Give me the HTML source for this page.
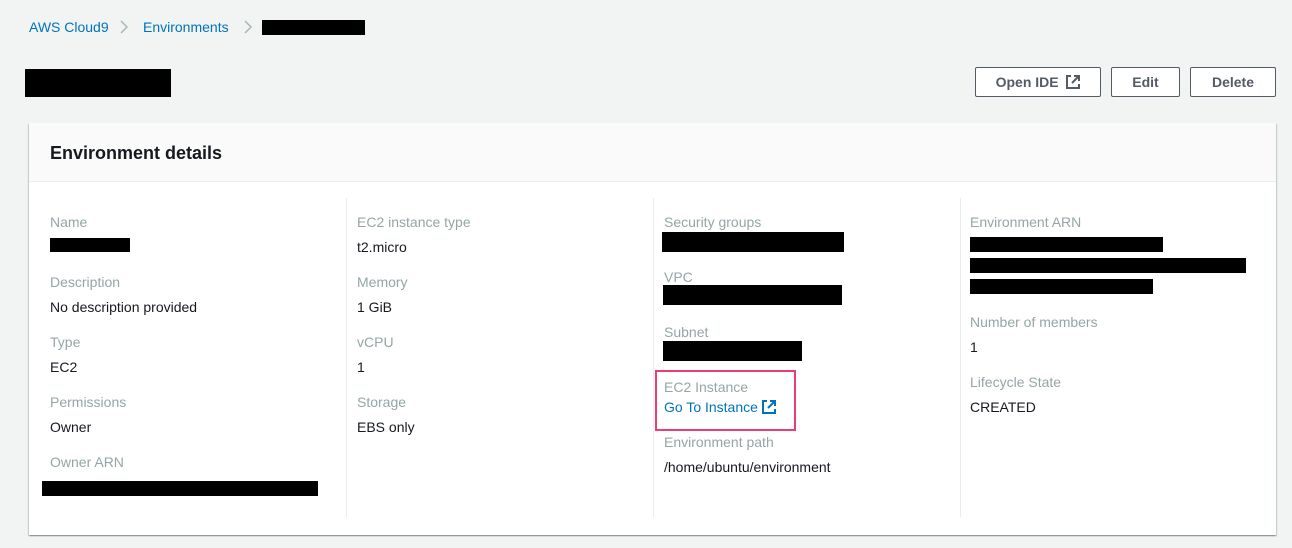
<!DOCTYPE html>
<html><head><style>
body{margin:0;width:1292px;height:548px;background:#f2f3f3;font-family:"Liberation Sans",sans-serif;position:relative;overflow:hidden;color:#16191f}
.a{position:absolute;font-size:14px;line-height:20px;white-space:nowrap}
.l{color:#95a5a6}
.r{position:absolute;background:#000}
.btn{position:absolute;top:67px;height:28px;border:1px solid #545b64;border-radius:2px;background:#fff;font-weight:bold;font-size:14px;color:#545b64;display:flex;align-items:center;justify-content:center}
.dv{position:absolute;top:198px;height:319px;width:1px;background:#eaeded}
a{color:#0073bb;text-decoration:none}
</style></head><body>
<div class="a" style="left:29px;top:17px"><a>AWS Cloud9</a></div>
<svg style="position:absolute;left:119px;top:20px" width="10" height="14"><path d="M2 1l6 6-6 6" fill="none" stroke="#aab7b8" stroke-width="1.5"/></svg>
<div class="a" style="left:143px;top:17px"><a>Environments</a></div>
<svg style="position:absolute;left:243px;top:20px" width="10" height="14"><path d="M2 1l6 6-6 6" fill="none" stroke="#aab7b8" stroke-width="1.5"/></svg>
<div class="r" style="left:262px;top:20px;width:103px;height:15px"></div>
<div class="r" style="left:25px;top:69px;width:146px;height:28px"></div>
<div class="btn" style="left:975px;width:124px">Open IDE&nbsp;&nbsp;<svg width="14" height="14" viewBox="0 0 14 14"><path d="M5 1H1v12h12V9M8 1h5v5M13 1L6 8" fill="none" stroke="#545b64" stroke-width="2"/></svg></div>
<div class="btn" style="left:1111px;width:67px">Edit</div>
<div class="btn" style="left:1190px;width:84px">Delete</div>
<div style="position:absolute;left:29px;top:123px;width:1247px;height:412px;background:#fff;box-shadow:0 1px 1px 0 rgba(0,28,36,.3),1px 1px 1px 0 rgba(0,28,36,.15),-1px 1px 1px 0 rgba(0,28,36,.15)">
<div style="height:58px;background:#fafafa;border-bottom:1px solid #eaeded"></div></div>
<div class="a" style="left:50px;top:142px;font-size:18px;font-weight:bold;line-height:22px">Environment details</div>
<div class="dv" style="left:346px"></div><div class="dv" style="left:653px"></div><div class="dv" style="left:960px"></div>

<div class="a l" style="left:50px;top:212px">Name</div>
<div class="r" style="left:50px;top:238px;width:80px;height:14px"></div>
<div class="a l" style="left:50px;top:272px">Description</div>
<div class="a" style="left:50px;top:297px">No description provided</div>
<div class="a l" style="left:50px;top:332px">Type</div>
<div class="a" style="left:50px;top:357px">EC2</div>
<div class="a l" style="left:50px;top:392px">Permissions</div>
<div class="a" style="left:50px;top:417px">Owner</div>
<div class="a l" style="left:50px;top:452px">Owner ARN</div>
<div class="r" style="left:42px;top:481px;width:276px;height:15px"></div>

<div class="a l" style="left:357px;top:212px">EC2 instance type</div>
<div class="a" style="left:357px;top:237px">t2.micro</div>
<div class="a l" style="left:357px;top:272px">Memory</div>
<div class="a" style="left:357px;top:297px">1 GiB</div>
<div class="a l" style="left:357px;top:332px">vCPU</div>
<div class="a" style="left:357px;top:357px">1</div>
<div class="a l" style="left:357px;top:392px">Storage</div>
<div class="a" style="left:357px;top:417px">EBS only</div>

<div class="a l" style="left:664px;top:212px">Security groups</div>
<div class="r" style="left:662px;top:232px;width:182px;height:20px"></div>
<div class="a l" style="left:664px;top:267px">VPC</div>
<div class="r" style="left:663px;top:285px;width:179px;height:20px"></div>
<div class="a l" style="left:664px;top:322px">Subnet</div>
<div class="r" style="left:663px;top:341px;width:139px;height:20px"></div>
<div style="position:absolute;left:655px;top:370px;width:137px;height:57px;border:2px solid #ec3d73"></div>
<div class="a l" style="left:664px;top:377px">EC2 Instance</div>
<div class="a" style="left:664px;top:397px"><a>Go To Instance</a></div>
<svg style="position:absolute;left:762px;top:400px" width="14" height="14" viewBox="0 0 14 14"><path d="M5 1H1v12h12V9M8 1h5v5M13 1L6 8" fill="none" stroke="#0073bb" stroke-width="2"/></svg>
<div class="a l" style="left:664px;top:432px">Environment path</div>
<div class="a" style="left:664px;top:457px">/home/ubuntu/environment</div>

<div class="a l" style="left:970px;top:212px">Environment ARN</div>
<div class="r" style="left:970px;top:237px;width:193px;height:15px"></div>
<div class="r" style="left:970px;top:258px;width:276px;height:15px"></div>
<div class="r" style="left:970px;top:279px;width:183px;height:15px"></div>
<div class="a l" style="left:970px;top:312px">Number of members</div>
<div class="a" style="left:970px;top:337px">1</div>
<div class="a l" style="left:970px;top:372px">Lifecycle State</div>
<div class="a" style="left:970px;top:397px">CREATED</div>
</body></html>
